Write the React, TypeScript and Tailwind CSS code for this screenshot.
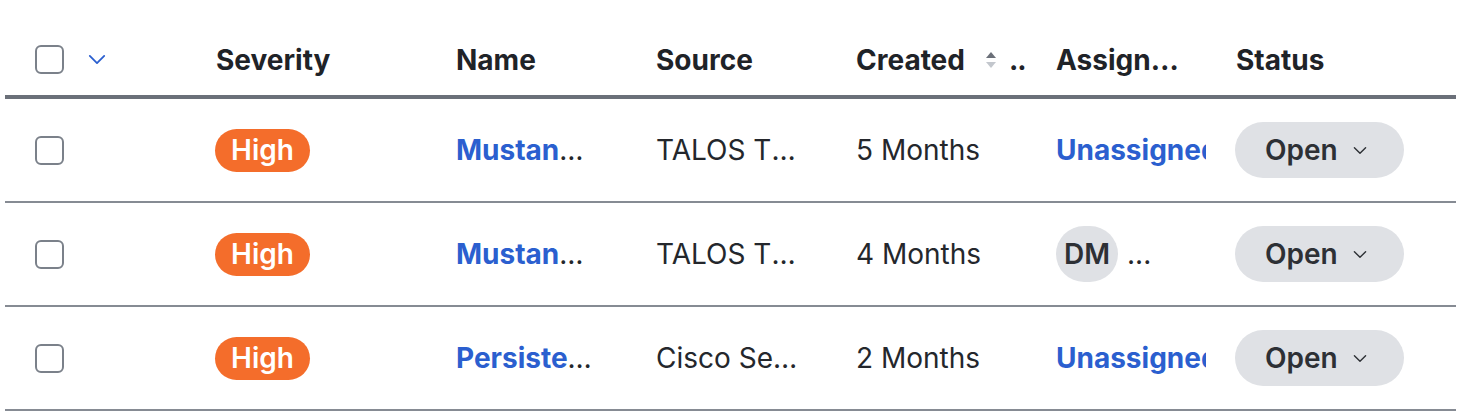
import React from "react";

const GRID = "grid grid-cols-[191px_240px_200px_200px_200px_180px_240px]";

function Checkbox() {
  return <div className="w-[29px] h-[29px] rounded-[6px] border-[2.5px] border-[#7b818a] bg-white" />;
}

function Chevron({ className }: { className?: string }) {
  return (
    <svg viewBox="0 0 20 12" className={className} fill="none" stroke="currentColor" strokeWidth="2" strokeLinecap="round" strokeLinejoin="round">
      <path d="M2 2 L10 10 L18 2" />
    </svg>
  );
}

function Badge() {
  return (
    <span className="inline-flex items-center justify-center h-[43px] w-[95px] rounded-full bg-[#f46d2b] text-white text-[28px] font-semibold leading-none">
      High
    </span>
  );
}

function StatusPill() {
  return (
    <div className="flex items-center h-[56px] w-[169px] rounded-full bg-[#dfe1e5] pl-[30px] text-[#2d3035]">
      <span className="text-[28px] font-semibold leading-none">Open</span>
      <Chevron className="w-[14px] h-[9px] ml-[15px] text-[#2d3035]" />
    </div>
  );
}

type Row = {
  name: string;
  source: string;
  created: string;
  assignee: "unassigned" | "DM";
};

const rows: Row[] = [
  { name: "Mustang Panda activity", source: "TALOS Threat Intel", created: "5 Months", assignee: "unassigned" },
  { name: "Mustang Panda activity", source: "TALOS Threat Intel", created: "4 Months", assignee: "DM" },
  { name: "Persistence detected", source: "Cisco Secure Endpoint", created: "2 Months", assignee: "unassigned" },
];

export default function App() {
  return (
    <div className="w-[1462px] h-[420px] bg-white font-['Inter','Noto_Sans',sans-serif] text-[#24272c]">
      <div className="ml-[5px] w-[1451px]">
        {/* header */}
        <div className={`${GRID} h-[99px] border-b-4 border-[#6b7079] pt-[24px] items-center text-[28px] font-bold text-[#1f2328]`}>
          <div className="pl-[30px] flex items-center gap-[24px]">
            <Checkbox />
            <Chevron className="w-[18px] h-[11px] text-[#2b5fcf]" />
          </div>
          <div className="pl-5">Severity</div>
          <div className="pl-5">Name</div>
          <div className="pl-5">Source</div>
          <div className="pl-5 flex items-center">
            <span>Created</span>
            <svg viewBox="0 0 12 20" className="w-[12px] h-[20px] ml-[20px]">
              <path d="M1 8 L6 2 L11 8 Z" fill="#6b7079" />
              <path d="M1 12 L6 18 L11 12 Z" fill="#c3c7cd" />
            </svg>
            <span className="ml-[12px] text-[#1f2328] font-bold tracking-[-1px]">..</span>
          </div>
          <div className="pl-5">
            <div className="w-[125px] truncate">Assignee</div>
          </div>
          <div className="pl-5">Status</div>
        </div>

        {rows.map((r, i) => (
          <div key={i} className={`${GRID} h-[104px] border-b-2 border-[#868b93] items-center text-[28px]`}>
            <div className="pl-[30px]">
              <Checkbox />
            </div>
            <div className="pl-[19px]">
              <Badge />
            </div>
            <div className="pl-5">
              <div className="w-[140px] truncate">
                <span className="font-bold text-[#2b5fcf]">{r.name}</span>
              </div>
            </div>
            <div className="pl-5">
              <div className="w-[143px] truncate">{r.source}</div>
            </div>
            <div className="pl-5">{r.created}</div>
            <div className="pl-5">
              {r.assignee === "unassigned" ? (
                <div className="w-[150px] overflow-hidden whitespace-nowrap font-bold text-[#2b5fcf]">Unassigned</div>
              ) : (
                <div className="flex items-center">
                  <div className="w-[62px] h-[56px] rounded-full bg-[#dfe1e5] flex items-center justify-center font-semibold text-[#2d3035]">
                    DM
                  </div>
                  <span className="ml-[9px] leading-none">...</span>
                </div>
              )}
            </div>
            <div className="pl-[19px]">
              <StatusPill />
            </div>
          </div>
        ))}
      </div>
    </div>
  );
}
